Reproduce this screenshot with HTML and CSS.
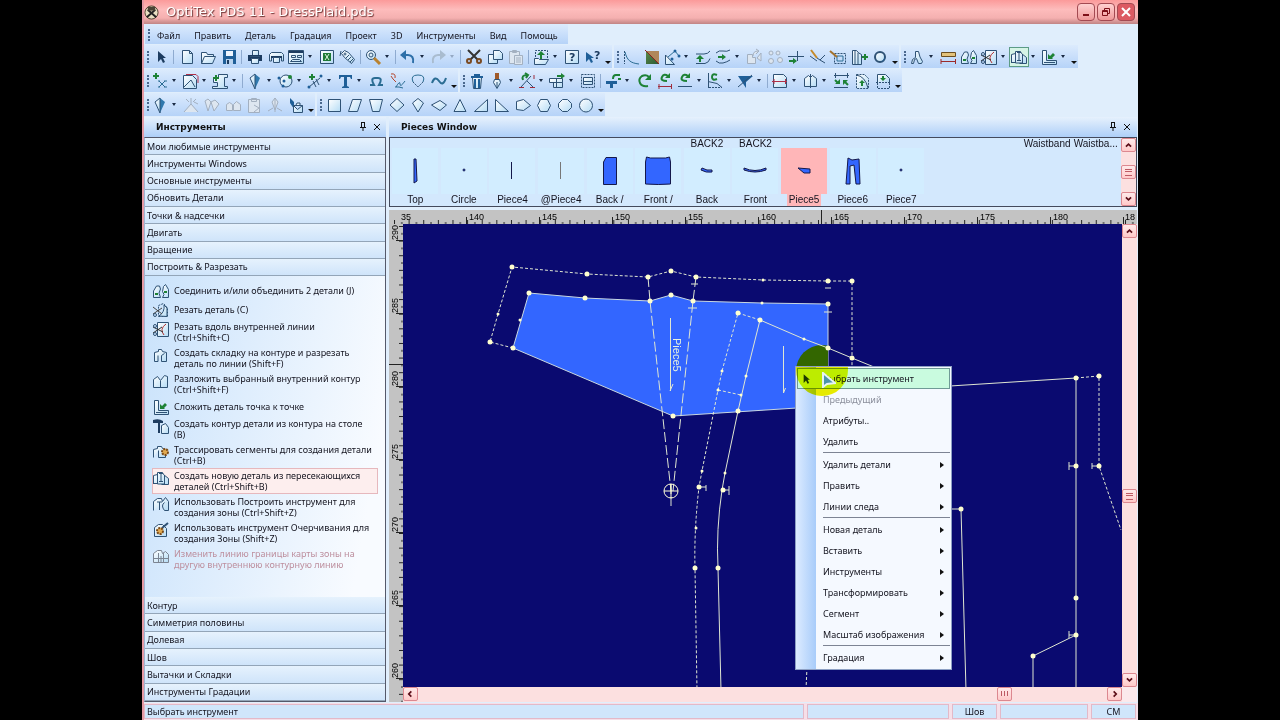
FILE: index.html
```html
<!DOCTYPE html>
<html lang="ru">
<head>
    <meta charset="UTF-8">
    <meta name="viewport" content="width=device-width, initial-scale=1.0">
    <title>OptiTex PDS 11 - DressPlaid.pds</title>
    <link rel="stylesheet" href="styles.css">
</head>
<body>
    <!-- icon set -->
    <svg class="sprite" aria-hidden="true">
        <defs>
            <linearGradient id="sky" x1="0" y1="0" x2="1" y2="1"><stop offset="0" stop-color="#fff"/><stop offset="1" stop-color="#b5dcf5"/></linearGradient>
            <linearGradient id="olive" x1="0" y1="0" x2="1" y2="1"><stop offset="0" stop-color="#5b8a4a"/><stop offset="1" stop-color="#2c5a34"/></linearGradient>
        </defs>
        <symbol id="cursor" viewBox="0 0 18 18"><path class="navy" d="M6 3v11l3-3 2 4 2-1-2-4h3z"/></symbol>
        <symbol id="new" viewBox="0 0 18 18"><path class="sheet" d="M4.500 2.500h7l3 3v10h-10z"/><path class="ln" d="M11.500 2.500v3h3"/></symbol>
        <symbol id="open" viewBox="0 0 18 18"><path class="sheet" d="M2.500 15.500v-11h5l1 2h6v2"/><path class="sheet" d="M2.500 15.500l3-7h11l-3 7z"/></symbol>
        <symbol id="save" viewBox="0 0 18 18"><path class="blue" d="M3 2h13v14H3z"/><path fill="#eef6ff" d="M6 3h7v5H6z"/><path fill="#b8d3ee" d="M6 11h7v5H6z"/><path class="navy" d="M7 12h2v4H7z"/></symbol>
        <symbol id="print" viewBox="0 0 18 18"><path class="sheet" d="M6.500 7V2.500h6V7"/><path class="navy" d="M2 7h14v6H2z"/><path class="sheet" d="M5.500 10.500h7v5h-7z"/><path class="ln" d="M4 8.500h10" stroke="#7fb4dc"/></symbol>
        <symbol id="plot" viewBox="0 0 18 18"><path class="sheet" d="M2.500 13V6.500l2-2h10l2 2V13h-2V9.500h-10V13z"/><path class="navy" d="M4 8h11v2H4z"/><path class="sheet" d="M6.500 9.500h6v5h-6z"/></symbol>
        <symbol id="layout" viewBox="0 0 18 18"><path class="sheet" d="M1.500 2.500h15v13h-15z"/><path class="navy" d="M2 3h14v2H2z"/><path class="ln" d="M4.500 7.500h4v2h-4zM10.500 7.500h4v2h-4zM3.500 13.500l2-2h7l2 2z"/></symbol>
        <symbol id="excel" viewBox="0 0 18 18"><path class="sheet" d="M2.500 2.500h13v13h-13z"/><path fill="#1f7a35" d="M5 5h8v8H5z"/><path d="M7 6l4 6M11 6l-4 6" stroke="#dff5df"/></symbol>
        <symbol id="tag" viewBox="0 0 18 18"><path class="sheet" d="M2.500 5.500l3-3 4 2 6 7-3 4-7-6z"/><circle class="ln" cx="6" cy="6" r="1"/><path class="ln" d="M7 10l3-3M9 12l3-3M11 14l3-3M2 3L1 8"/></symbol>
        <symbol id="zoom" viewBox="0 0 18 18"><circle class="sheet" cx="7" cy="7" r="4.500"/><circle class="ln" cx="7" cy="7" r="2" /><path d="M10 10l6 6" stroke="#b9822f" stroke-width="3"/></symbol>
        <symbol id="undo" viewBox="0 0 18 18"><path d="M3 7h6c4 0 6 3 5 8" fill="none" stroke="#2d6fa8" stroke-width="2"/><path fill="#2d6fa8" d="M1 7l6-5v10z"/></symbol>
        <symbol id="redo" viewBox="0 0 18 18"><path d="M15 7H9c-4 0-6 3-5 8" fill="none" stroke="#a9bccf" stroke-width="2"/><path fill="#a9bccf" d="M17 7l-6-5v10z"/></symbol>
        <symbol id="cut" viewBox="0 0 18 18"><path d="M3 2l10 10M15 2L5 12" stroke="#333" stroke-width="2"/><circle cx="4" cy="13" r="2" fill="none" stroke="#7a4a22" stroke-width="2"/><circle cx="14" cy="13" r="2" fill="none" stroke="#7a4a22" stroke-width="2"/></symbol>
        <symbol id="copy" viewBox="0 0 18 18"><path class="sheet" d="M2.500 6.500h9v9h-9z"/><path class="sheet" d="M7.500 2.500h6l3 3v6h-9z"/></symbol>
        <symbol id="paste" viewBox="0 0 18 18"><path class="gr" d="M2.500 3.500h10v12h-10zM5.500 2.500h4v2h-4z"/><path class="gr" d="M7.500 7.500h8v9h-8zM9 10h5M9 12h5M9 14h5"/></symbol>
        <symbol id="export" viewBox="0 0 18 18"><path class="sheet" d="M2.500 16.500v-6h4l1 1h9l-3 5z"/><path class="ln dash" d="M3.500 9V2.500h12V10"/><path class="green" d="M9 3l4 4h-3v4H8V7H5z"/></symbol>
        <symbol id="curve" viewBox="0 0 18 18"><path class="ln dash" d="M2.500 3v13"/><path class="teal" d="M3 4c2 8 5 11 14 12"/></symbol>
        <symbol id="shade" viewBox="0 0 18 18"><path fill="url(#olive)" d="M3 3h13v13H3z"/><path d="M3 3h13v13z" fill="#b0875a"/><path d="M2 2l14 14" stroke="#8c1f1f"/></symbol>
        <symbol id="tri" viewBox="0 0 18 18"><path class="sheet" d="M2.500 7v9.500h9z"/><path class="teal" d="M5 9l7-6 4 5"/><circle class="blue" cx="12" cy="3" r="1.500"/><circle class="blue" cx="16" cy="8" r="1.500"/><circle class="blue" cx="9" cy="11" r="1.500"/></symbol>
        <symbol id="seam-up" viewBox="0 0 18 18"><path class="ln" d="M2 6h8q4 0 6-3M2 15.500h9q4-1 5-5"/><path class="green" d="M6 7l4 4H7v3H5v-3H2z"/></symbol>
        <symbol id="seam-in" viewBox="0 0 18 18"><path class="ln" d="M2 5q3-3 7-2t7-1M2 13q3 3 7 2t7-3"/><path class="green" d="M8 6l4 3-4 3zM4 8h4v2H4z"/></symbol>
        <symbol id="gray-cut" viewBox="0 0 18 18"><path class="gr" d="M2.500 6.500h5v3h3v6h-8zM8 8q0-5 5-5M11 1l3 2-3 3M12 10l4-5v8z"/></symbol>
        <symbol id="gray-dots" viewBox="0 0 18 18"><circle class="gr" cx="5" cy="5" r="2"/><circle class="gr" cx="12" cy="5" r="2"/><circle class="gr" cx="5" cy="13" r="2.500"/><circle class="gr" cx="14" cy="12" r="2.500"/></symbol>
        <symbol id="line-add" viewBox="0 0 18 18"><path class="ln" d="M1 8.500h16M10.500 3v10"/><path class="green" d="M2 12h4v-2l4 3-4 3v-2H2z"/></symbol>
        <symbol id="brush" viewBox="0 0 18 18"><path d="M3 2l6 8" stroke="#c58a2a" stroke-width="2"/><path class="ln" d="M9 10l3 2 5-5M2 8l7 5M12 12l5 3"/></symbol>
        <symbol id="brush-box" viewBox="0 0 18 18"><path class="ln dash" d="M5.500 5.500h11v10h-11z"/><path class="teal" d="M8 8h6v5H8z"/><path d="M1 3l7 6" stroke="#a5722c" stroke-width="2"/></symbol>
        <symbol id="grade" viewBox="0 0 18 18"><path class="sheet" d="M2.500 2.500h4q2 3 5 4v10h-9z"/><path class="ln" d="M5 3v13M8 5v11"/><path class="green" d="M12 8h2V6h2v2h2v2h-2v2h-2v-2h-2z"/></symbol>
        <symbol id="ball" viewBox="0 0 18 18"><circle class="sheet w2" cx="9" cy="9" r="5"/><path class="blue" d="M9 14a5 5 0 0 0 5-6q-1 5-5 6z"/></symbol>
        <symbol id="dress" viewBox="0 0 18 18"><path class="sheet" d="M3.500 15.500l1-4 3-2V3.500h3q1 6 4 10l-1 2h-3l-2-5-2 1-1 4z"/></symbol>
        <symbol id="ruler" viewBox="0 0 18 18"><path fill="#e3c27c" stroke="#6b4d20" d="M2.500 4.500h14v4h-14z"/><path d="M2 13.500h15M2 11v5M16.500 11v5" stroke="#9c2a2a" fill="none"/></symbol>
        <symbol id="join" viewBox="0 0 18 18"><path class="sheet" d="M1.500 15.500V9l3-5h3l1 3q-3 4 0 8.500z"/><path class="sheet" d="M10.500 15.500q3-3 0-6l1-5 2-2 3 5v8z"/><path class="green" d="M3 11h3v2H3zM12 9h3v2h-3z"/></symbol>
        <symbol id="cutline" viewBox="0 0 18 18"><path class="sheet" d="M5.500 2.500h11v14h-11z"/><path d="M14 4q-7 5-2 11" stroke="#b03030" fill="none"/><path d="M1 7l10 5M1 13l9-6" stroke="#333"/><circle class="ln" cx="3" cy="14" r="1.500"/><circle class="ln" cx="3" cy="6" r="1.500"/></symbol>
        <symbol id="build" viewBox="0 0 18 18"><path class="sheet" d="M1.500 14.500v-8l4-1v-2h5l1 2 5 4v6h-7"/><path class="ln" d="M1 14.500h5M5.500 5v10h7v-9M7 4.500h4M7 12.500h4M9 5v8"/></symbol>
        <symbol id="fold" viewBox="0 0 18 18"><path class="sheet" d="M2.500 2.500h4v10h10v4h-14z"/><path class="ln" d="M4 14.500h11"/><path class="green" d="M8 11V6l2 2 3-3 2 2-3 3 1 1z"/></symbol>

        <symbol id="point" viewBox="0 0 18 18"><path class="green" d="M2 3h2V1h2v2h2v2H6v2H4V5H2z"/><path class="teal" d="M8 9l6 6M14 9l-6 6M7 9h2M13 9h3M7 15h2M13 15h3"/></symbol>
        <symbol id="cutcorner" viewBox="0 0 18 18"><path class="sheet" d="M2.500 3.500h9l4 4v9h-13z"/><path d="M5 2.500h10l2 2V11" stroke="#b03048" fill="none"/><path class="ln" d="M3 15l7-7 4 7"/></symbol>
        <symbol id="sew" viewBox="0 0 18 18"><path class="sheet" d="M1.500 16.500h15v-2h-3v-9h3v-3h-9v4h-5v4h4v4h-5z"/><path class="green" d="M2 5h2V3h2v2h2v2H6v2H4V7H2z"/></symbol>
        <symbol id="dart" viewBox="0 0 18 18"><path fill="#2f78ad" d="M9 2l5 4-5 11z"/><path class="sheet" d="M9 2L4 6l5 11z"/></symbol>
        <symbol id="circ" viewBox="0 0 18 18"><circle class="sheet" cx="10" cy="9" r="6"/><circle class="blue" cx="3" cy="6" r="1.500"/><circle class="blue" cx="8" cy="9" r="1.500"/><circle class="green" cx="14" cy="5" r="2"/><circle class="blue" cx="7" cy="14" r="1.500"/></symbol>
        <symbol id="notch" viewBox="0 0 18 18"><path class="green" d="M3 4h2V2h2v2h2v2H7v2H5V6H3z"/><path class="ln" d="M3 15l11-9M7 9l3 6M10 7l3 6"/><circle class="blue" cx="15" cy="4" r="1.500"/><circle class="blue" cx="3" cy="15" r="1.500"/></symbol>
        <symbol id="text" viewBox="0 0 18 18"><path class="blue" d="M3 3h13v4h-1l-1-2h-3v9l2 1v1H6v-1l2-1V5H5L4 7H3z"/></symbol>
        <symbol id="omega" viewBox="0 0 18 18"><path class="teal w2" d="M3 13h4q-4-7 1-7h3q5 0 1 7h4"/></symbol>
        <symbol id="needle" viewBox="0 0 18 18"><path d="M3 2q5-1 4 4M3 4l2 3 3 3" stroke="#b5452b" fill="none"/><path class="teal" d="M8 15q4-7 4-3t5-3M7 15h4l4 1"/></symbol>
        <symbol id="arc" viewBox="0 0 18 18"><path class="teal" d="M4 10Q1 3 9 3t5 7"/><path class="ln dash" d="M4 10l5 5 5-5"/></symbol>
        <symbol id="wave" viewBox="0 0 18 18"><path class="teal w2" d="M2 11q3-8 7-2t7-3"/></symbol>
        <symbol id="trash" viewBox="0 0 18 18"><path class="sheet" d="M4.500 5.500h9l-1 11h-7z"/><path class="blue" d="M3 4h12v2H3zM6 2h6v2H6zM6 7h2v9H6zM10 7h2v9h-2z"/></symbol>
        <symbol id="pen" viewBox="0 0 18 18"><path fill="#a05a2a" d="M7 1h4v6H7z"/><path class="sheet" d="M6.500 7.500h5l1 3-3.500 6-3.500-6z"/><path class="ln" d="M9 10v6"/></symbol>
        <symbol id="rot-seg" viewBox="0 0 18 18"><path class="rot" d="M9 3q-6 0-4 5M7 1l3 2-2 3"/><path class="ln" d="M3 15l10-11M9 9l6 6"/><path d="M1 15.500h5M12 15.500h5M16 3v4" stroke="#a02c3c"/></symbol>
        <symbol id="flip-box" viewBox="0 0 18 18"><path class="sheet" d="M1.500 6.500h13v4h-13zM5.500 10.500h9v5h-9z"/><path class="ln" d="M8.500 7v8"/><path class="green" d="M9 3h4V1l4 3-4 3V5H9z"/></symbol>
        <symbol id="select-box" viewBox="0 0 18 18"><path class="ln dash" d="M2.500 2.500h13v13h-13z"/><path class="sheet" d="M4.500 5.500h9v7h-9z"/><path class="ln" d="M4 9.500h10"/></symbol>
        <symbol id="rot-t" viewBox="0 0 18 18"><path class="rot" d="M16 3h-4q-3 0-3 4M14 7h3"/><path class="blue" d="M2 9h11v3H9v4H6v-4H2z"/></symbol>
        <symbol id="rot" viewBox="0 0 18 18"><path class="rot" d="M14 5q-3-3-7-1-4 3-2 7t8 3"/><path class="green" d="M16 2v6h-6z"/></symbol>
        <symbol id="rot-h" viewBox="0 0 18 18"><path class="rot" d="M12 4q-4-3-6 1t5 4"/><path class="green" d="M14 1v5H9z"/><path d="M2 14.500h14M3 12v5M15.500 12v5" stroke="#a02c3c"/></symbol>
        <symbol id="rot-line" viewBox="0 0 18 18"><path class="rot" d="M12 4q-4-3-6 1t5 4"/><path class="green" d="M14 1v5H9z"/><path class="ln" d="M2 14.500h14"/></symbol>
        <symbol id="rot-piece" viewBox="0 0 18 18"><path class="ln" d="M2.500 1v15M2 9.500l9 2 5 4"/><path class="ln dash" d="M3 15.500h13"/><path class="rot" d="M11 3q-5-2-5 2t5 2"/></symbol>
        <symbol id="mirror" viewBox="0 0 18 18"><path class="blue" d="M2 4h15l-7 6v6z"/><path class="ln" d="M2 15L16 3"/></symbol>
        <symbol id="split" viewBox="0 0 18 18"><path class="sheet" d="M2.500 2.500h10l3 3v10h-13z"/><path d="M1 9.500h15M3 7v5M14.500 7v5" stroke="#b03048"/></symbol>
        <symbol id="shirt" viewBox="0 0 18 18"><path class="sheet" d="M3.500 14.500v-8l4-3 2 2 2-2 4 3v8z"/><path class="ln" d="M9.500 2v14"/></symbol>
        <symbol id="swap" viewBox="0 0 18 18"><path class="ln" d="M2 3.500h15M3.500 1v5M15.500 1v5M2 15.500h14"/><path class="green" d="M8 7v5H3zM11 13V8h5z"/><path class="rot" d="M3 8l3 3M13 10l3 3"/></symbol>
        <symbol id="walk" viewBox="0 0 18 18"><path class="sheet dash" d="M3.500 2.500h8l4 4v10h-12z"/><path class="ln" d="M3 3q9 1 12 13"/><path class="green" d="M9 8l3 3h-2v3H8v-3H6z"/></symbol>
        <symbol id="drop" viewBox="0 0 18 18"><path class="sheet" d="M3.500 10V2.500h8l4 4V10"/><path class="ln dash" d="M2 10.500h14M3.500 11v5.500h12V11"/><path class="green" d="M9 9L6 6h2V4h2v2h2z"/></symbol>

        <symbol id="wand" viewBox="0 0 18 18"><path class="gr" d="M2 16l7-8 7 8M9 8V2M4 3l3 3M14 3l-3 3M12 6l4 2"/></symbol>
        <symbol id="gray-dart" viewBox="0 0 18 18"><path class="gr" d="M2 5l3-2 3 3-3 9zM8 6l4-2 4 4-5 7z"/></symbol>
        <symbol id="gray-join" viewBox="0 0 18 18"><path class="gr" d="M2.500 14.500v-6l3-2 3 2v6zM9.500 14.500v-6l3-3 4 3v6z"/></symbol>
        <symbol id="gray-clip" viewBox="0 0 18 18"><path class="gr" d="M3.500 3.500h11v13h-11zM6.500 2.500h5v3h-5zM9 9l5 3-5 4"/></symbol>
        <symbol id="gray-open" viewBox="0 0 18 18"><path class="gr" d="M9 2l-3 4 3 8 3-8zM2 15l5-3M16 15l-5-3M9 2v14"/></symbol>
        <symbol id="dart-mail" viewBox="0 0 18 18"><path class="blue" d="M3 2l4 4v7L3 7z"/><path class="sheet" d="M6.500 9.500h9v7h-9zM6.500 9.500l4 4 5-4M9 9q0-3 4-2v2"/></symbol>
        <symbol id="s-rect" viewBox="0 0 18 18"><path class="sheet" d="M3.500 3.500h12v12h-12z"/></symbol>
        <symbol id="s-para" viewBox="0 0 18 18"><path class="sheet" d="M6.500 3.500h9l-4 12h-9z"/></symbol>
        <symbol id="s-trap" viewBox="0 0 18 18"><path class="sheet" d="M2.500 3.500h13l-3 12h-7z"/></symbol>
        <symbol id="s-rhomb" viewBox="0 0 18 18"><path class="sheet" d="M9 2.500L16 9l-7 6.500L2 9z"/></symbol>
        <symbol id="s-kite" viewBox="0 0 18 18"><path class="sheet" d="M9 2.500L14.500 7 9 16 3.500 7z"/></symbol>
        <symbol id="s-flat" viewBox="0 0 18 18"><path class="sheet" d="M1.500 9L10 4.500 16.500 9 10 14.500z"/></symbol>
        <symbol id="s-iso" viewBox="0 0 18 18"><path class="sheet" d="M9 3.500l6 12H3z"/></symbol>
        <symbol id="s-right" viewBox="0 0 18 18"><path class="sheet" d="M15.500 3.500v12h-13z"/></symbol>
        <symbol id="s-left" viewBox="0 0 18 18"><path class="sheet" d="M2.500 3.500v12h13z"/></symbol>
        <symbol id="s-penta" viewBox="0 0 18 18"><path class="sheet" d="M2.500 5.500l7-2 7 6-7 5-7-1z"/></symbol>
        <symbol id="s-hexa" viewBox="0 0 18 18"><path class="sheet" d="M5.500 3.500h7l3 6-3 6h-7l-3-6z"/></symbol>
        <symbol id="s-octa" viewBox="0 0 18 18"><path class="sheet" d="M6.500 3.500h5l4 4v4l-4 4h-5l-4-4v-4z"/></symbol>
        <symbol id="s-circle" viewBox="0 0 18 18"><circle class="sheet" cx="9" cy="9.500" r="6.500"/></symbol>

        <symbol id="cutpiece" viewBox="0 0 18 18"><path class="ln dash" d="M6.500 15.500h9V7l-4-4.500-5 2z"/><path class="sheet" d="M7 15q6-4 5-11l3 3v8.500z"/><path d="M1 6l9 7M1 13l9-6" stroke="#444"/><circle class="ln" cx="3" cy="14" r="1.500"/></symbol>
        <symbol id="pleat" viewBox="0 0 18 18"><path class="sheet" d="M2.500 15.500v-9l4-1V3.500h3l1 2 4 1v9h-5v-6l3-2M6 9.500v6H2.500"/></symbol>
        <symbol id="unfold" viewBox="0 0 18 18"><path class="sheet" d="M1.500 15.500v-8l4-3 3 4 4-5 3 1v11z"/><path class="ln" d="M8.500 9v6"/></symbol>
        <symbol id="hammer" viewBox="0 0 18 18"><path class="navy" d="M1 3q6-2 10 1v2H8v10H6V6H1z"/><path class="sheet" d="M9.500 8.500l4-2 3 4v6h-7z"/></symbol>
        <symbol id="gearbox" viewBox="0 0 18 18"><path class="sheet" d="M1.500 14.500v-8l4-1v-2h4l1 2 3 1v8h-7v-7"/><circle cx="13" cy="9" r="3" fill="#e2a94f" stroke="#7a4a18" stroke-dasharray="2 1" stroke-width="2"/></symbol>
        <symbol id="zone" viewBox="0 0 18 18"><path class="sheet" d="M1.500 15.500v-9l4-3h4l1 3 3-4 3 4v9h-4q-4-5 0-8"/><path class="ln" d="M5 7h5M7.500 7v8"/></symbol>
        <symbol id="zone-gear" viewBox="0 0 18 18"><path class="sheet" d="M2.500 15.500v-9l4-3h4l4 4v8z"/><path class="ln" d="M10 7l6-5" stroke-width="2"/><circle cx="8" cy="10" r="3" fill="#e2a94f" stroke="#7a4a18" stroke-dasharray="2 1" stroke-width="2"/></symbol>
        <symbol id="zone-off" viewBox="0 0 18 18"><path class="sheet pale" d="M1.500 15.500v-9l4-3h4l1 3 3-2 3 3v8zM2 11.500h14M6.500 6v9M11.500 6v9M9 9v6"/></symbol>
        <symbol id="up" viewBox="0 0 14 14"><path class="chev" d="M4 9l3-3 3 3"/></symbol>
        <symbol id="down" viewBox="0 0 14 14"><path class="chev" d="M4 5l3 3 3-3"/></symbol>
        <symbol id="left" viewBox="0 0 14 14"><path class="chev" d="M8 4L5 7l3 3"/></symbol>
        <symbol id="right" viewBox="0 0 14 14"><path class="chev" d="M6 4l3 3-3 3"/></symbol>
        <symbol id="pin" viewBox="0 0 12 12"><path d="M4.500 2v4M3 6.500h6M7.500 2v4M4 1.500h4M6 7v3" stroke="#111" fill="none"/></symbol>
        <symbol id="close" viewBox="0 0 12 12"><path d="M3 3l6 6M9 3L3 9" stroke="#111"/></symbol>
    </svg>

    <div class="app">
        <header class="titlebar">
            <svg class="app-icon" viewBox="0 0 16 16"><circle cx="8" cy="8" r="7" fill="#e9dfc2" stroke="#4b3a2a"/><path d="M3 13l9-8M13 13L4 5" fill="none" stroke="#222" stroke-width="2"/><path d="M4 2h8v4H4z" fill="#4a4335"/></svg>
            <h1>OptiTex PDS 11 - DressPlaid.pds</h1>
            <button class="win-btn" aria-label="Свернуть"><svg viewBox="0 0 16 16"><path d="M5 11h6" stroke="#7d1018" stroke-width="2"/></svg></button>
            <button class="win-btn" aria-label="Восстановить"><svg viewBox="0 0 16 16"><path d="M6.500 6V4.500h5v5H10M4.500 6.500h5v5h-5zM4 7.500h6" fill="none" stroke="#7d1018"/></svg></button>
            <button class="win-btn win-close" aria-label="Закрыть"><svg viewBox="0 0 16 16"><path d="M4 4l8 8M12 4l-8 8" stroke="#fff" stroke-width="2"/></svg></button>
        </header>

        <nav class="menubar">
            <span class="grip"></span>
            <button>Файл</button><button>Править</button><button>Деталь</button><button>Градация</button><button>Проект</button><button>3D</button><button>Инструменты</button><button>Вид</button><button>Помощь</button>
        </nav>

        <div class="toolrow">
            <div class="toolbar">
                <span class="grip"></span>
                <button class="tool"><svg><use href="#cursor"/></svg></button><i class="sep"></i>
                <button class="tool"><svg><use href="#new"/></svg></button>
                <button class="tool"><svg><use href="#open"/></svg></button>
                <button class="tool"><svg><use href="#save"/></svg></button><i class="sep"></i>
                <button class="tool"><svg><use href="#print"/></svg></button>
                <button class="tool"><svg><use href="#plot"/></svg></button>
                <button class="tool drop"><svg><use href="#layout"/></svg></button>
                <button class="tool"><svg><use href="#excel"/></svg></button>
                <button class="tool"><svg><use href="#tag"/></svg></button><i class="sep"></i>
                <button class="tool drop"><svg><use href="#zoom"/></svg></button><i class="sep"></i>
                <button class="tool drop"><svg><use href="#undo"/></svg></button>
                <button class="tool drop off"><svg><use href="#redo"/></svg></button><i class="sep"></i>
                <button class="tool"><svg><use href="#cut"/></svg></button>
                <button class="tool"><svg><use href="#copy"/></svg></button>
                <button class="tool"><svg><use href="#paste"/></svg></button><i class="sep"></i>
                <button class="tool drop"><svg><use href="#export"/></svg></button>
                <button class="tool"><svg viewBox="0 0 18 18"><path class="sheet" d="M2.500 2.500h13v13h-13z"/><text class="q" x="6" y="13">?</text></svg></button>
                <button class="tool"><svg viewBox="0 0 18 18"><path class="blue" d="M2 4v10l3-3 2 4 2-1-2-4h3z"/><text class="q" x="10" y="11">?</text></svg></button>
                <button class="more" aria-label="Ещё"></button>
            </div>
            <div class="toolbar">
                <span class="grip"></span>
                <button class="tool"><svg><use href="#curve"/></svg></button>
                <button class="tool"><svg><use href="#shade"/></svg></button>
                <button class="tool drop"><svg><use href="#tri"/></svg></button>
                <button class="tool"><svg><use href="#seam-up"/></svg></button>
                <button class="tool drop"><svg><use href="#seam-in"/></svg></button>
                <button class="tool"><svg><use href="#gray-cut"/></svg></button>
                <button class="tool"><svg><use href="#gray-dots"/></svg></button>
                <button class="tool"><svg><use href="#line-add"/></svg></button>
                <button class="tool"><svg><use href="#brush"/></svg></button>
                <button class="tool"><svg><use href="#brush-box"/></svg></button>
                <button class="tool"><svg><use href="#grade"/></svg></button>
                <button class="tool"><svg><use href="#ball"/></svg></button>
                <button class="more" aria-label="Ещё"></button>
            </div>
            <div class="toolbar">
                <span class="grip"></span>
                <button class="tool drop"><svg><use href="#dress"/></svg></button>
                <button class="tool"><svg><use href="#ruler"/></svg></button>
                <button class="tool"><svg><use href="#join"/></svg></button>
                <button class="tool drop"><svg><use href="#cutline"/></svg></button>
                <button class="tool drop active"><svg><use href="#build"/></svg></button>
                <button class="tool drop"><svg><use href="#fold"/></svg></button>
                <button class="more" aria-label="Ещё"></button>
            </div>
        </div>

        <div class="toolrow">
            <div class="toolbar">
                <span class="grip"></span>
                <button class="tool drop"><svg><use href="#point"/></svg></button>
                <button class="tool drop"><svg><use href="#cutcorner"/></svg></button>
                <button class="tool drop"><svg><use href="#sew"/></svg></button><i class="sep"></i>
                <button class="tool drop"><svg><use href="#dart"/></svg></button>
                <button class="tool drop"><svg><use href="#circ"/></svg></button>
                <button class="tool drop"><svg><use href="#notch"/></svg></button>
                <button class="tool drop"><svg><use href="#text"/></svg></button>
                <button class="tool"><svg><use href="#omega"/></svg></button>
                <button class="tool"><svg><use href="#needle"/></svg></button>
                <button class="tool"><svg><use href="#arc"/></svg></button>
                <button class="tool"><svg><use href="#wave"/></svg></button>
                <button class="more" aria-label="Ещё"></button>
            </div>
            <div class="toolbar">
                <span class="grip"></span>
                <button class="tool"><svg><use href="#trash"/></svg></button>
                <button class="tool drop"><svg><use href="#pen"/></svg></button>
                <button class="tool drop"><svg><use href="#rot-seg"/></svg></button>
                <button class="tool drop"><svg><use href="#flip-box"/></svg></button>
                <button class="tool"><svg><use href="#select-box"/></svg></button><i class="sep"></i>
                <button class="tool drop"><svg><use href="#rot-t"/></svg></button>
                <button class="tool"><svg><use href="#rot"/></svg></button>
                <button class="tool"><svg><use href="#rot-h"/></svg></button>
                <button class="tool drop"><svg><use href="#rot-line"/></svg></button>
                <button class="tool drop"><svg><use href="#rot-piece"/></svg></button>
                <button class="tool drop"><svg><use href="#mirror"/></svg></button><i class="sep"></i>
                <button class="tool drop"><svg><use href="#split"/></svg></button>
                <button class="tool drop"><svg><use href="#shirt"/></svg></button>
                <button class="tool"><svg><use href="#swap"/></svg></button>
                <button class="tool"><svg><use href="#walk"/></svg></button>
                <button class="tool"><svg><use href="#drop"/></svg></button>
                <button class="more" aria-label="Ещё"></button>
            </div>
        </div>

        <div class="toolrow">
            <div class="toolbar">
                <span class="grip"></span>
                <button class="tool drop"><svg><use href="#dart"/></svg></button>
                <button class="tool"><svg><use href="#wand"/></svg></button>
                <button class="tool"><svg><use href="#gray-dart"/></svg></button>
                <button class="tool"><svg><use href="#gray-join"/></svg></button>
                <button class="tool"><svg><use href="#gray-clip"/></svg></button>
                <button class="tool"><svg><use href="#gray-open"/></svg></button>
                <button class="tool"><svg><use href="#dart-mail"/></svg></button>
                <button class="more" aria-label="Ещё"></button>
            </div>
            <div class="toolbar">
                <span class="grip"></span>
                <button class="tool"><svg><use href="#s-rect"/></svg></button>
                <button class="tool"><svg><use href="#s-para"/></svg></button>
                <button class="tool"><svg><use href="#s-trap"/></svg></button>
                <button class="tool"><svg><use href="#s-rhomb"/></svg></button>
                <button class="tool"><svg><use href="#s-kite"/></svg></button>
                <button class="tool"><svg><use href="#s-flat"/></svg></button>
                <button class="tool"><svg><use href="#s-iso"/></svg></button>
                <button class="tool"><svg><use href="#s-right"/></svg></button>
                <button class="tool"><svg><use href="#s-left"/></svg></button>
                <button class="tool"><svg><use href="#s-penta"/></svg></button>
                <button class="tool"><svg><use href="#s-hexa"/></svg></button>
                <button class="tool"><svg><use href="#s-octa"/></svg></button>
                <button class="tool"><svg><use href="#s-circle"/></svg></button>
                <button class="more" aria-label="Ещё"></button>
            </div>
        </div>

        <main class="workspace">
            <aside class="side">
                <div class="panel-head side-head">
                    <h2>Инструменты</h2>
                    <button class="mini" aria-label="Закрепить"><svg><use href="#pin"/></svg></button>
                    <button class="mini" aria-label="Закрыть"><svg><use href="#close"/></svg></button>
                </div>
                <div class="accordion">
                    <div class="heads heads-top">
                        <button>Мои любимые инструменты</button>
                        <button>Инструменты Windows</button>
                        <button>Основные инструменты</button>
                        <button>Обновить Детали</button>
                        <button>Точки &amp; надсечки</button>
                        <button>Двигать</button>
                        <button>Вращение</button>
                        <button>Построить &amp; Разрезать</button>
                    </div>
                    <div class="tool-list">
                        <button><svg><use href="#join"/></svg>Соединить и/или объединить 2 детали (J)</button>
                        <button><svg><use href="#cutpiece"/></svg>Резать деталь (C)</button>
                        <button><svg><use href="#cutline"/></svg>Резать вдоль внутренней линии<br>(Ctrl+Shift+C)</button>
                        <button><svg><use href="#pleat"/></svg>Создать складку на контуре и разрезать<br>деталь по линии (Shift+F)</button>
                        <button><svg><use href="#unfold"/></svg>Разложить выбранный внутренний контур<br>(Ctrl+Shift+F)</button>
                        <button><svg><use href="#fold"/></svg>Сложить деталь точка к точке</button>
                        <button><svg><use href="#hammer"/></svg>Создать контур детали из контура на столе<br>(B)</button>
                        <button><svg><use href="#gearbox"/></svg>Трассировать сегменты для создания детали<br>(Ctrl+B)</button>
                        <button class="current"><svg><use href="#build"/></svg>Создать новую деталь из пересекающихся<br>деталей (Ctrl+Shift+B)</button>
                        <button><svg><use href="#zone"/></svg>Использовать Построить инструмент для<br>создания зоны (Ctrl+Shift+Z)</button>
                        <button><svg><use href="#zone-gear"/></svg>Использовать инструмент Очерчивания для<br>создания Зоны (Shift+Z)</button>
                        <button disabled><svg><use href="#zone-off"/></svg>Изменить линию границы карты зоны на<br>другую внутреннюю контурную линию</button>
                    </div>
                    <div class="heads heads-bottom">
                        <button>Контур</button>
                        <button>Симметрия половины</button>
                        <button>Долевая</button>
                        <button>Шов</button>
                        <button>Вытачки и Складки</button>
                        <button>Инструменты Градации</button>
                    </div>
                </div>
            </aside>

            <section class="content">
                <div class="panel-head">
                    <h2>Pieces Window</h2>
                    <button class="mini" aria-label="Закрепить"><svg><use href="#pin"/></svg></button>
                    <button class="mini" aria-label="Закрыть"><svg><use href="#close"/></svg></button>
                </div>
                <div class="pieces">
                    <ul class="piece-grid">
                        <li><span></span><svg viewBox="0 0 46 46"><path class="pc" d="M22 11h2l1 22-3 2z"/></svg><b>Top</b></li>
                        <li><span></span><svg viewBox="0 0 46 46"><circle class="pc" cx="23" cy="22" r="1"/></svg><b>Circle</b></li>
                        <li><span></span><svg viewBox="0 0 46 46"><path class="pc" d="M22.500 14v17"/></svg><b>Piece4</b></li>
                        <li><span></span><svg viewBox="0 0 46 46"><path class="pc thin" d="M22.500 14v17"/></svg><b>@Piece4</b></li>
                        <li><span></span><svg viewBox="0 0 46 46"><path class="pc" d="M19 9.500h10.500v27h-13V14z"/></svg><b>Back /</b></li>
                        <li><span></span><svg viewBox="0 0 46 46"><path class="pc" d="M11.500 9l4 1h15l4-1 1 5v22q-12 1-25 0V14z"/></svg><b>Front /</b></li>
                        <li><span>BACK2</span><svg viewBox="0 0 46 46"><path class="pc" d="M18 20q5 3 10 2v2q-6 1-11-2z"/></svg><b>Back</b></li>
                        <li><span>BACK2</span><svg viewBox="0 0 46 46"><path class="pc" d="M12 20q11 5 22 0v2q-11 4-22 0z"/></svg><b>Front</b></li>
                        <li class="picked"><span></span><svg viewBox="0 0 46 46"><path class="pc" d="M17 20l12 1v4h-6z"/></svg><b>Piece5</b></li>
                        <li><span></span><svg viewBox="0 0 46 46"><path class="pc" d="M18 10l4 2 7-1 1 25h-4l-2-19-4 1v18h-4z"/></svg><b>Piece6</b></li>
                        <li><span></span><svg viewBox="0 0 46 46"><circle class="pc" cx="23" cy="22" r="1"/></svg><b>Piece7</b></li>
                        <li></li>
                        <li></li>
                        <li><span>Waistband</span></li>
                        <li><span>Waistba...</span></li>
                    </ul>
                    <div class="scroll vert">
                        <button aria-label="Вверх"><svg><use href="#up"/></svg></button>
                        <span class="gap-a"></span><i class="thumb"></i><span class="gap-a"></span>
                        <button aria-label="Вниз"><svg><use href="#down"/></svg></button>
                    </div>
                </div>

                <div class="drawing">
                    <svg class="ruler ruler-x">
                        <defs>
                            <pattern id="tx" width="14.620" height="14" x="5" patternUnits="userSpaceOnUse"><path class="tick" d="M.500 10v4M7.800 12v2"/></pattern>
                        </defs>
                        <rect width="100%" height="100%" fill="url(#tx)"/>
                        <path class="tick" d="M77.500 7v7M150.500 7v7M223.500 7v7M296.500 7v7M369.500 7v7M442.500 7v7M515.500 7v7M588.500 7v7M661.500 7v7M734.500 7v7"/>
                        <path class="tick" d="M432.500 0v14" stroke="#555"/>
                        <text x="12" y="10">35</text><text x="80" y="10">140</text><text x="153" y="10">145</text><text x="226" y="10">150</text><text x="299" y="10">155</text><text x="372" y="10">160</text><text x="445" y="10">165</text><text x="518" y="10">170</text><text x="591" y="10">175</text><text x="664" y="10">180</text><text x="736" y="10">18</text>
                    </svg>
                    <svg class="ruler ruler-y">
                        <defs>
                            <pattern id="ty" width="14" height="14.620" y="2" patternUnits="userSpaceOnUse"><path class="tick" d="M10 .500h4M12 7.800h2"/></pattern>
                        </defs>
                        <rect width="100%" height="100%" fill="url(#ty)"/>
                        <path class="tick" d="M7 16.500h7M7 89.500h7M7 162.500h7M7 235.500h7M7 308.500h7M7 381.500h7M7 454.500h7M0 140.500h14"/>
                        <text transform="translate(9 16) rotate(-90)">290</text><text transform="translate(9 89) rotate(-90)">285</text><text transform="translate(9 162) rotate(-90)">280</text><text transform="translate(9 235) rotate(-90)">275</text><text transform="translate(9 308) rotate(-90)">270</text><text transform="translate(9 381) rotate(-90)">265</text><text transform="translate(9 454) rotate(-90)">260</text>
                    </svg>

                    <div class="canvas">
                        <svg class="pattern">
                            <defs><clipPath id="body"><path d="M529 293L585 298 650 301 671 295 693 301 762 303 828 304V406L673 416 513 348z"/></clipPath></defs>
                            <g transform="translate(-403 -224)">
                                <path class="fabric" d="M529 293L585 298 650 301 671 295 693 301 762 303 828 304V406L673 416 513 348z"/>
                                <circle cx="822" cy="371" r="26" fill="#336600" clip-path="url(#body)"/>
                                <path class="seam" d="M513 348L490 342 498 314 512 267 587 274 648 277 671 271 696 277 763 280 828 281H852V367"/>
                                <path class="dartline" d="M648 277L650 301 671 491M696 277L693 301 673 491M671 484v22"/>
                                <path class="seam" d="M760 320L738 313 722 371 718 390 702 471 699 487Q694 530 695 568L697 690M718 390L741 395M1076 378L1099 376V466L1121 530M807 667L806 690"/>
                                <path class="edge" d="M760 320L746 376 738 411 725 473 722 490Q716 530 718 568L721 690M760 320L804 339 828 348 852 358 874 367M950 386L1076 378V690M1076 635L1033 656V690M950 509H961L966 690"/>
                                <path class="edge" d="M670.500 318V391M670 391l3-7M783.500 346V393l2-5"/>
                                <path class="edge" d="M691 284h7M688 308h9M825 288h6M824 312h8M723 490h6M729 486v9M699 487h7M706 485v6M1069 466h7M1069 462v8M1092 466h7M1092 463v6M1069 635h7M1069 631v7"/>
                                <circle class="target" cx="671" cy="491" r="7"/><path class="target" d="M664 491h14M671 484v14"/>
                                <text class="piece-name" transform="translate(673 338) rotate(90)">Piece5</text>
                                <g class="dots">
                                    <circle cx="512" cy="267" r="2.500"/><circle cx="587" cy="274" r="2.500"/><circle cx="648" cy="277" r="2.500"/><circle cx="671" cy="271" r="2.500"/><circle cx="696" cy="277" r="2.500"/><circle cx="828" cy="281" r="2.500"/><circle cx="852" cy="281" r="2.500"/><circle cx="852" cy="358" r="2.500"/>
                                    <circle cx="490" cy="342" r="2.500"/><circle cx="513" cy="348" r="2.500"/><circle cx="529" cy="293" r="2.500"/><circle cx="585" cy="298" r="2.500"/><circle cx="650" cy="301" r="2.500"/><circle cx="671" cy="295" r="2.500"/><circle cx="693" cy="301" r="2.500"/><circle cx="828" cy="304" r="2.500"/><circle cx="828" cy="348" r="2.500"/><circle cx="673" cy="416" r="2.500"/>
                                    <circle cx="738" cy="313" r="2.500"/><circle cx="760" cy="320" r="2.500"/><circle cx="738" cy="411" r="2.500"/><circle cx="699" cy="487" r="2.500"/><circle cx="723" cy="490" r="2.500"/><circle cx="695" cy="568" r="2.500"/><circle cx="718" cy="568" r="2.500"/>
                                    <circle cx="961" cy="509" r="2.500"/><circle cx="1076" cy="378" r="2.500"/><circle cx="1099" cy="376" r="2.500"/><circle cx="1076" cy="466" r="2.500"/><circle cx="1099" cy="466" r="2.500"/><circle cx="1076" cy="598" r="2.500"/><circle cx="1076" cy="635" r="2.500"/><circle cx="1033" cy="656" r="2.500"/>
                                    <circle cx="498" cy="314" r="1.500"/><circle cx="520" cy="320" r="1.500"/><circle cx="763" cy="280" r="1.500"/><circle cx="762" cy="303" r="1.500"/><circle cx="804" cy="339" r="1.500"/><circle cx="722" cy="371" r="1.500"/><circle cx="746" cy="376" r="1.500"/><circle cx="718" cy="390" r="1.500"/><circle cx="741" cy="395" r="1.500"/><circle cx="702" cy="471" r="1.500"/><circle cx="725" cy="473" r="1.500"/><circle cx="696" cy="528" r="1.500"/>
                                </g>
                            </g>
                        </svg>

                        <div class="context-menu" role="menu">
                            <button class="hot"><svg class="row-icon"><use href="#cursor"/></svg>Выбрать инструмент</button>
                            <button disabled>Предыдущий</button>
                            <button>Атрибуты..</button>
                            <button>Удалить</button>
                            <hr>
                            <button class="sub">Удалить детали</button>
                            <button class="sub">Править</button>
                            <button class="sub">Линии следа</button>
                            <hr>
                            <button class="sub">Новая деталь</button>
                            <button class="sub">Вставить</button>
                            <button class="sub">Инструменты</button>
                            <button class="sub">Трансформировать</button>
                            <button class="sub">Сегмент</button>
                            <button class="sub">Масштаб изображения</button>
                            <hr>
                            <button class="sub">Градация</button>
                            <span class="glow"></span>
                            <svg class="pointer" viewBox="0 0 14 16"><path d="M1 1v14l4-3 8-1z" fill="#4b94ab" stroke="#e6f3f3" stroke-width="2"/></svg>
                        </div>
                    </div>

                    <div class="scroll vert canvas-v">
                        <button aria-label="Вверх"><svg><use href="#up"/></svg></button>
                        <span class="gap-b"></span><i class="thumb"></i><span class="gap-c"></span>
                        <button aria-label="Вниз"><svg><use href="#down"/></svg></button>
                    </div>
                    <div class="scroll horz canvas-h">
                        <button aria-label="Влево"><svg><use href="#left"/></svg></button>
                        <span class="gap-d"></span><i class="thumb"></i><span class="gap-e"></span>
                        <button aria-label="Вправо"><svg><use href="#right"/></svg></button>
                    </div>
                </div>
            </section>
        </main>

        <footer class="statusbar">
            <span class="st-main">Выбрать инструмент</span>
            <span class="st-b"></span>
            <span class="st-c">Шов</span>
            <span class="st-d"></span>
            <span class="st-c">СМ</span>
        </footer>
    </div>
</body>
</html>
```
FILE: styles.css
```css
* {
    box-sizing: border-box;
}
body {
    margin: 0;
    padding: 0 142px;
    background: #000;
    color: #14141f;
    font: 9px/11px "Noto Sans", Tahoma, sans-serif;
}
button {
    margin: 0;
    padding: 0;
    border: 0;
    background: none;
    color: inherit;
    font: inherit;
    text-align: left;
}
.sprite {
    position: absolute;
    width: 0;
    height: 0;
}
.app {
    display: flex;
    flex-direction: column;
    min-height: 100vh;
    background: #e0eefc;
    border-left: 2px solid #e59aa4;
}

/* icon paint */
.ln { fill: none; stroke: #2f5275; }
.sheet { fill: url(#sky); stroke: #2f5275; }
.pale { stroke: #7c8492; }
.navy { fill: #1d3c60; }
.blue { fill: #1f5f98; }
.green { fill: #1e8236; }
.teal { fill: none; stroke: #2b6d93; }
.w2 { stroke-width: 2; }
.rot { fill: none; stroke: #1e8236; stroke-width: 2; }
.gr { fill: #dde6f0; stroke: #a3b0c0; }
.dash { stroke-dasharray: 2 1; }
.chev { fill: none; stroke: #5c0d18; stroke-width: 2; }
.q {
    font: bold 11px "DejaVu Sans", sans-serif;
    fill: #1d3c60;
}

/* title bar */
.titlebar {
    display: flex;
    align-items: center;
    gap: 2px;
    height: 24px;
    padding: 0 3px 0 0;
    background: linear-gradient(#fb9a9a, #fdbcbc 40%, #f5b0b0 75%, #c08484);
}
.app-icon {
    width: 15px;
    height: 15px;
}
.titlebar h1 {
    flex: 1;
    margin: 0;
    padding-left: 5px;
    color: #fff;
    font: 500 13px/20px "DejaVu Sans", sans-serif;
    text-shadow: 1px 1px 1px #6b3030;
}
.win-btn {
    width: 18px;
    height: 18px;
    border: 1px solid #a34a52;
    border-radius: 4px;
    background: linear-gradient(#ffd0d0, #ef9898);
}
.win-btn svg {
    display: block;
    width: 16px;
    height: 16px;
}
.win-close {
    background: #dc5a62;
}

/* menu and toolbars */
.menubar, .toolbar {
    display: flex;
    align-items: center;
    background: linear-gradient(#dcebfd, #c9dffb 50%, #b6d3f8);
}
.menubar {
    align-self: flex-start;
    height: 20px;
    margin: 0 0 1px 1px;
    padding: 2px 10px 0 3px;
    gap: 14px;
}
.menubar .grip {
    margin-right: -8px;
}
.grip {
    width: 3px;
    height: 12px;
    border-left: 2px dotted #4a688e;
}
.toolrow {
    display: flex;
    gap: 2px;
    height: 24px;
    padding-bottom: 1px;
}
.toolbar {
    padding-left: 3px;
}
.tool {
    display: flex;
    align-items: center;
    justify-content: center;
    width: 21px;
    height: 22px;
}
.tool svg {
    flex: none;
    width: 18px;
    height: 18px;
}
.tool.drop {
    width: 30px;
    justify-content: flex-start;
    gap: 3px;
    padding-left: 1px;
}
.tool.drop::after {
    content: "";
    border: 2px solid transparent;
    border-top: 3px solid #1a2a44;
    border-bottom: 0;
}
.tool.off::after {
    opacity: 0.3;
}
.active svg {
    outline: 1px solid #5d9c86;
    background: #d6f4e6;
}
.sep {
    width: 1px;
    height: 14px;
    margin: 0 2px;
    background: #8fabd0;
}
.more {
    width: 9px;
    height: 20px;
    padding: 12px 0 0 2px;
}
.more::after {
    content: "";
    display: block;
    width: 0;
    border: 3px solid transparent;
    border-top-color: #111;
    border-bottom: 0;
}

/* panels */
.workspace {
    flex: 1;
    display: flex;
    gap: 3px;
    padding: 0 1px 1px 0;
}
.panel-head {
    display: flex;
    align-items: center;
    gap: 2px;
    height: 20px;
    padding: 0 4px 0 12px;
    background: linear-gradient(#e6f1fd, #aecff8);
}
.side-head {
    padding-right: 3px;
}
.panel-head h2 {
    flex: 1;
    margin: 0;
    font: bold 9px/18px "DejaVu Sans", sans-serif;
    color: #111;
}
.mini svg {
    display: block;
    width: 12px;
    height: 12px;
}
.side {
    flex: 0 0 242px;
    min-width: 0;
    display: flex;
    flex-direction: column;
}
.accordion {
    flex: 1;
    display: flex;
    flex-direction: column;
    border: 1px solid #55596a;
    border-left-color: #9fb6d4;
    background: linear-gradient(100deg, #c5e0fb, #f8fbff 85%);
}
.heads {
    display: flex;
    flex-direction: column;
}
.heads-top {
    min-height: 138px;
}
.heads-bottom {
    min-height: 104px;
}
.heads button {
    flex: 1;
    padding-left: 2px;
    border-bottom: 1px solid #93a5b8;
    background: linear-gradient(#e6f2fd, #cfe4fa);
}
.tool-list {
    flex: 1;
    display: flex;
    flex-direction: column;
    padding: 5px 7px;
}
.tool-list button {
    position: relative;
    min-height: 19px;
    padding: 2px 0 2px 22px;
    white-space: nowrap;
    display: block;
}
.tool-list button svg {
    position: absolute;
    left: 0;
    top: 1px;
    width: 18px;
    height: 18px;
}
.tool-list .current {
    background: #fdeeee;
    outline: 1px solid #e6b8bd;
    outline-offset: -1px;
}
.tool-list button:disabled {
    color: #bd8f9e;
}
.content {
    flex: 1;
    min-width: 0;
    display: flex;
    flex-direction: column;
}
.pieces {
    display: flex;
    border: 1px solid #444a5c;
    background: #d3e8fd;
}
.piece-grid {
    flex: 1;
    display: grid;
    grid-template-columns: repeat(15, 1fr);
    margin: 0;
    padding: 0 1px;
    list-style: none;
    font: 10px/12px "Liberation Sans", Arial, sans-serif;
}
.piece-grid li {
    display: flex;
    flex-direction: column;
    align-items: center;
    min-width: 0;
}
.piece-grid span {
    height: 10px;
    line-height: 12px;
    white-space: nowrap;
}
.piece-grid svg {
    width: 46px;
    height: 46px;
    background: #d2edff;
}
.piece-grid b {
    padding: 0 2px;
    font-weight: normal;
}
.picked svg, .picked b {
    background: #ffb6b8;
}
.pc {
    fill: #3366ff;
    stroke: #14184a;
}
.thin {
    stroke: #777;
}

/* scrollbars */
.scroll {
    display: flex;
    background: #fce0e0;
}
.vert {
    flex-direction: column;
    width: 15px;
}
.horz {
    height: 15px;
}
.scroll button, .thumb {
    flex: none;
    width: 15px;
    height: 14px;
    border: 1px solid #dc8890;
    border-radius: 2px;
    background: linear-gradient(#ffeaea, #ffc9c9);
}
.scroll svg {
    display: block;
    width: 13px;
    height: 12px;
}
.thumb::after {
    content: "";
    display: block;
    height: 5px;
    margin: 3px;
    border: 1px solid #bd5a64;
    border-width: 1px 0;
    background: linear-gradient(transparent 1px, #bd5a64 1px, #bd5a64 2px, transparent 2px);
}
.horz .thumb::after {
    border-width: 0 1px;
    background: linear-gradient(90deg, transparent 2px, #bd5a64 2px, #bd5a64 3px, transparent 3px);
}
.gap-a { flex: 1; }
.gap-b { flex: 252; }
.gap-c { flex: 170; }
.gap-d { flex: 581; }
.gap-e { flex: 95; }

/* drawing area */
.drawing {
    flex: 1;
    display: grid;
    grid-template-columns: 14px 1fr 15px;
    grid-template-rows: 14px 1fr 15px;
    margin-top: 3px;
    background: #fbe9ec;
}
.ruler {
    width: 100%;
    height: 100%;
    overflow: hidden;
    background: #c3c3c3;
    font: 9px "Liberation Sans", Arial, sans-serif;
}
.ruler-x {
    grid-area: 1 / 1 / 2 / 4;
}
.ruler-y {
    grid-area: 2 / 1 / 4 / 2;
}
.tick {
    stroke: #222;
    fill: none;
}
.canvas {
    position: relative;
    grid-area: 2 / 2;
    background: #0a0a70;
}
.canvas-v {
    grid-area: 2 / 3;
}
.canvas-h {
    grid-area: 3 / 2;
}
.pattern {
    position: absolute;
    inset: 0;
    width: 100%;
    height: 100%;
    overflow: hidden;
}
.fabric {
    fill: #3366ff;
    stroke: #c9d8e0;
}
.edge, .seam, .dartline, .target {
    fill: none;
    stroke: #dfe6d2;
}
.seam {
    stroke-dasharray: 3 2;
}
.dartline {
    stroke-dasharray: 10 3;
}
.target {
    stroke: #ffffd8;
}
.dots {
    fill: #ffffcf;
}
.piece-name {
    font: 11px "Liberation Sans", Arial, sans-serif;
    fill: #e4f0e0;
}

/* context menu */
.context-menu {
    position: absolute;
    left: 392px;
    top: 142px;
    display: flex;
    flex-direction: column;
    width: 157px;
    padding: 1px;
    border: 1px solid #8da0c4;
    background: linear-gradient(90deg, #dcebff, #a8ccfa 20px, #f5f9ff 20px);
    overflow: hidden;
}
.context-menu button {
    display: flex;
    align-items: center;
    height: 21px;
    padding: 0 6px 0 26px;
    white-space: nowrap;
}
.context-menu button:disabled {
    color: #8b8f9c;
}
.context-menu .hot {
    padding-left: 1px;
    border: 1px solid #6f9a96;
    background: #c9fbdf;
}
.row-icon {
    width: 14px;
    height: 14px;
    margin-right: 10px;
}
.context-menu hr {
    width: 127px;
    height: 1px;
    margin: 0 0 1px auto;
    border: 0;
    background: #7d8494;
}
.sub::after {
    content: "";
    margin-left: auto;
    border: 3px solid transparent;
    border-left: 4px solid #111;
    border-right: 0;
}
.glow {
    position: absolute;
    left: 0;
    top: -23px;
    width: 52px;
    height: 52px;
    border-radius: 50%;
    background: #f0f000;
    mix-blend-mode: multiply;
}
.pointer {
    position: absolute;
    left: 26px;
    top: 5px;
    width: 14px;
    height: 16px;
}

/* status bar */
.statusbar {
    display: flex;
    gap: 3px;
    height: 17px;
    padding: 1px 2px 1px 0;
    background: #f6dfe8;
}
.statusbar span {
    padding: 0 2px;
    border: 1px solid #e3b9c8;
    background: #d0e6fb;
    line-height: 14px;
}
.st-main { flex: 1; }
.st-b { flex: 0 0 142px; }
.statusbar .st-c {
    flex: 0 0 45px;
    text-align: center;
}
.st-d { flex: 0 0 88px; }
```
